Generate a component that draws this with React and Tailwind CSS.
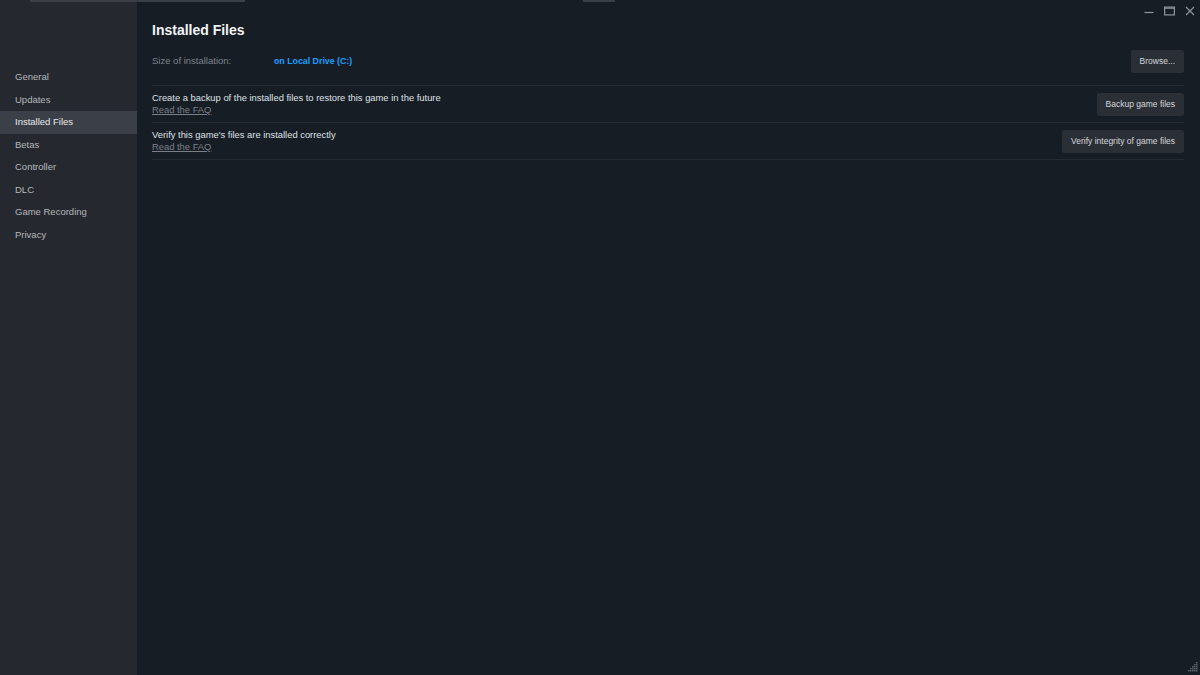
import React from "react";

const font = { fontFamily: '"Liberation Sans", Arial, sans-serif' };

const navItems = ["General", "Updates", "Installed Files", "Betas", "Controller", "DLC", "Game Recording", "Privacy"];

function Btn({ children }) {
  return (
    <button className="h-[23px] px-[9px] bg-[#2a2e35] text-[#d6d9dc] text-[8.5px] rounded-[2px] whitespace-nowrap">
      {children}
    </button>
  );
}

function Row({ text, btn }) {
  return (
    <div className="flex items-center justify-between border-b border-[#262b33] h-[37px]">
      <div className="flex flex-col leading-[12px]">
        <span className="text-[9.4px] text-[#dfe2e5]">{text}</span>
        <span className="text-[9.4px] text-[#7b8088] underline">Read the FAQ</span>
      </div>
      <Btn>{btn}</Btn>
    </div>
  );
}

export default function App() {
  return (
    <div className="w-[1200px] h-[675px] flex bg-[#171d25] overflow-hidden relative" style={font}>
      <div className="absolute top-0 left-[30px] w-[215px] h-[2px] bg-[#3a3e45]" />
      <div className="absolute top-0 left-[583px] w-[32px] h-[2px] bg-[#3a3e45]" />
      {/* sidebar */}
      <div className="w-[137px] h-full bg-[#25282e] flex flex-col pt-[66px]">
        {navItems.map((n) => (
          <div
            key={n}
            className={
              "h-[22.5px] flex items-center pl-[15px] text-[9.5px] " +
              (n === "Installed Files" ? "bg-[#3b3f47] text-[#e8eaec]" : "text-[#b4b8bd]")
            }
          >
            {n}
          </div>
        ))}
      </div>
      {/* main */}
      <div className="flex-1 flex flex-col pl-[15px] pr-[16px] relative">
        <div className="absolute top-[6px] right-[5px] flex items-center gap-[10px] text-[#8e949b]">
          <svg width="10" height="10" viewBox="0 0 10 10"><path d="M0.5 6.5H9.5" stroke="currentColor" strokeWidth="1.2" /></svg>
          <svg width="11" height="10" viewBox="0 0 11 10"><rect x="0.6" y="1.1" width="9.8" height="7.8" fill="none" stroke="currentColor" strokeWidth="1.2" /><path d="M0.6 2.2H10.4" stroke="currentColor" strokeWidth="1.2" /></svg>
          <svg width="10" height="10" viewBox="0 0 10 10"><path d="M1 1L9 9M9 1L1 9" stroke="currentColor" strokeWidth="1.2" /></svg>
        </div>
        <h1 className="mt-[20px] text-[14px] font-bold text-[#f2f4f5] leading-[20px]">Installed Files</h1>
        <div className="mt-[9px] flex items-start justify-between border-b border-[#262b33] h-[37px] pt-[1px]">
          <div className="flex items-center h-[23px] text-[9.5px]">
            <span className="text-[#7d838b] w-[122px]">Size of installation:</span>
            <span className="text-[#1a9fff] font-bold text-[8.8px]">on Local Drive (C:)</span>
          </div>
          <Btn>Browse...</Btn>
        </div>
        <Row text="Create a backup of the installed files to restore this game in the future" btn="Backup game files" />
        <Row text="Verify this game's files are installed correctly" btn="Verify integrity of game files" />
      </div>
      <svg className="absolute right-[2px] bottom-[3px]" width="10" height="10" viewBox="0 0 10 10">
        {[
          [8, 0], [6, 2], [8, 2], [4, 4], [6, 4], [8, 4], [2, 6], [4, 6], [6, 6], [8, 6], [0, 8], [2, 8], [4, 8], [6, 8], [8, 8],
        ].map(([x, y], i) => (
          <rect key={i} x={x} y={y} width="1.5" height="1.5" fill="#5a5f68" />
        ))}
      </svg>
    </div>
  );
}
